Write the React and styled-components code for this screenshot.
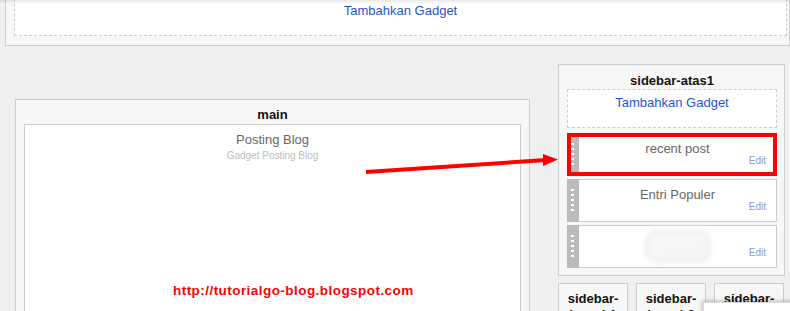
import React from "react";
import styled, { createGlobalStyle } from "styled-components";

const GlobalStyle = createGlobalStyle`
  html, body {
    margin: 0;
    padding: 0;
    background: #efefef;
    font-family: "Liberation Sans", Arial, sans-serif;
  }
`;

const Page = styled.div`
  position: relative;
  height: 311px;
  overflow: hidden;
  background: #efefef;

  &::before {
    content: "";
    position: absolute;
    top: 0;
    left: 0;
    right: 0;
    height: 4px;
    background: linear-gradient(rgba(0, 0, 0, 0.09), rgba(0, 0, 0, 0));
    z-index: 5;
  }
`;

const Header = styled.div`
  margin: -20px 0 0 5px;
  padding: 8px 2px 9px 8px;
  background: #f7f7f7;
  border: 1px solid #ccc;
`;

const AddGadget = styled.div`
  background: #fff;
  border: 1px dashed #ccc;
  padding: ${(p) => (p.$wide ? "13px 0 16px" : "5px 0 16px")};
  text-align: center;
  font-size: 13px;
  line-height: 16px;
  color: #1f55d6;
`;

const Row = styled.div`
  display: flex;
  align-items: flex-start;
  padding-left: 15px;
  gap: 28px;
`;

const Section = styled.div`
  box-sizing: border-box;
  background: #f7f7f7;
  border: 1px solid #ccc;
`;

const MainSection = styled(Section)`
  width: 515px;
  margin-top: 53px;
  padding: 7px 8px 0;
`;

const SectionTitle = styled.div`
  text-align: center;
  font-weight: bold;
  font-size: 13px;
  line-height: 16px;
  color: #111;
  margin-bottom: ${(p) => p.$gap || 0}px;
`;

const PostArea = styled.div`
  background: #fff;
  border: 1px solid #ccc;
  min-height: 300px;
  padding-top: 7px;
  text-align: center;
`;

const PostTitle = styled.div`
  font-size: 13px;
  line-height: 16px;
  color: #666;
`;

const PostSub = styled.div`
  font-size: 10px;
  line-height: 12px;
  margin-top: 2px;
  color: #bbb;
`;

const SideColumn = styled.div`
  width: 227px;
  margin-top: 18px;
  display: flex;
  flex-direction: column;
  gap: 7px;
`;

const SideSection = styled(Section)`
  padding: 8px 7px 7px 8px;
`;

const Widgets = styled.div`
  display: flex;
  flex-direction: column;
  gap: 3px;
  margin-top: 5px;
`;

const Widget = styled.div`
  display: flex;
  height: 43px;
  outline: ${(p) => (p.$highlight ? "4px solid #f00" : "none")};
  outline-offset: -4px;
`;

const Grip = styled.div`
  width: 12px;
  flex: none;
  background: #bbb;
  display: flex;
  flex-direction: column;
  gap: 3px;
  padding: 10px 0 0 4px;
  box-sizing: border-box;

  span {
    width: 3px;
    height: 2px;
    background: #fff;
  }
`;

const WidgetBody = styled.div`
  flex: 1;
  background: #fff;
  border: 1px solid #ccc;
  border-left: none;
  padding: 7px 10px 0 0;
  display: flex;
  flex-direction: column;
`;

const WidgetTitle = styled.div`
  text-align: center;
  padding-left: 10px;
  font-size: 13px;
  line-height: 16px;
  color: #666;
`;

const Blob = styled.div`
  align-self: center;
  margin: 0 0 0 10px;
  width: 58px;
  height: 26px;
  border-radius: 9px;
  background: #f6f6f6;
  box-shadow: 0 0 5px 3px #e9e9e9;
  filter: blur(2px);
`;

const EditLink = styled.div`
  text-align: right;
  font-size: 10px;
  line-height: 12px;
  margin-top: ${(p) => (p.$after ? -12 : -2)}px;
  color: #8a9ac8;
`;

const SmallSections = styled.div`
  display: flex;
  gap: 8px;
`;

const SmallSection = styled(Section)`
  width: 70px;
  flex: none;
  padding-top: 7px;
  height: 60px;
`;

const Popup = styled.div`
  position: absolute;
  left: 703px;
  top: 302px;
  width: 200px;
  height: 100px;
  background: #fff;
  border: 1px solid #ddd;
  box-shadow: -1px -1px 4px rgba(0, 0, 0, 0.25);
`;

const Watermark = styled.div`
  position: absolute;
  left: 173px;
  top: 283px;
  font-size: 13.5px;
  line-height: 16px;
  letter-spacing: 0.45px;
  font-weight: bold;
  color: #f00;
`;

const Arrow = styled.svg`
  position: absolute;
  left: 0;
  top: 0;
  pointer-events: none;
`;

const Dots = () => (
  <Grip>
    <span />
    <span />
    <span />
    <span />
    <span />
  </Grip>
);

const widgets = [
  { title: "recent post", highlight: true },
  { title: "Entri Populer" },
  { blurred: true },
];

export default function App() {
  return (
    <Page>
      <GlobalStyle />
      <Header>
        <AddGadget $wide>Tambahkan Gadget</AddGadget>
      </Header>

      <Row>
        <MainSection>
          <SectionTitle $gap={1}>main</SectionTitle>
          <PostArea>
            <PostTitle>Posting Blog</PostTitle>
            <PostSub>Gadget Posting Blog</PostSub>
          </PostArea>
        </MainSection>

        <SideColumn>
          <SideSection>
            <SectionTitle>sidebar-atas1</SectionTitle>
            <AddGadget>Tambahkan Gadget</AddGadget>
            <Widgets>
              {widgets.map((w, i) => (
                <Widget key={i} $highlight={w.highlight}>
                  <Dots />
                  <WidgetBody>
                    {w.blurred ? <Blob /> : <WidgetTitle>{w.title}</WidgetTitle>}
                    <EditLink $after={w.blurred}>Edit</EditLink>
                  </WidgetBody>
                </Widget>
              ))}
            </Widgets>
          </SideSection>

          <SmallSections>
            <SmallSection>
              <SectionTitle>sidebar-bawah1</SectionTitle>
            </SmallSection>
            <SmallSection>
              <SectionTitle>sidebar-bawah2</SectionTitle>
            </SmallSection>
            <SmallSection>
              <SectionTitle>sidebar-bawah3</SectionTitle>
            </SmallSection>
          </SmallSections>
        </SideColumn>
      </Row>

      <Watermark>http://tutorialgo-blog.blogspot.com</Watermark>

      <Arrow width="790" height="311" viewBox="0 0 790 311">
        <line x1="366" y1="172" x2="546" y2="160" stroke="#f00" strokeWidth="4" />
        <polygon points="543,154 558,159.5 543,166" fill="#f00" />
      </Arrow>

      <Popup />
    </Page>
  );
}
